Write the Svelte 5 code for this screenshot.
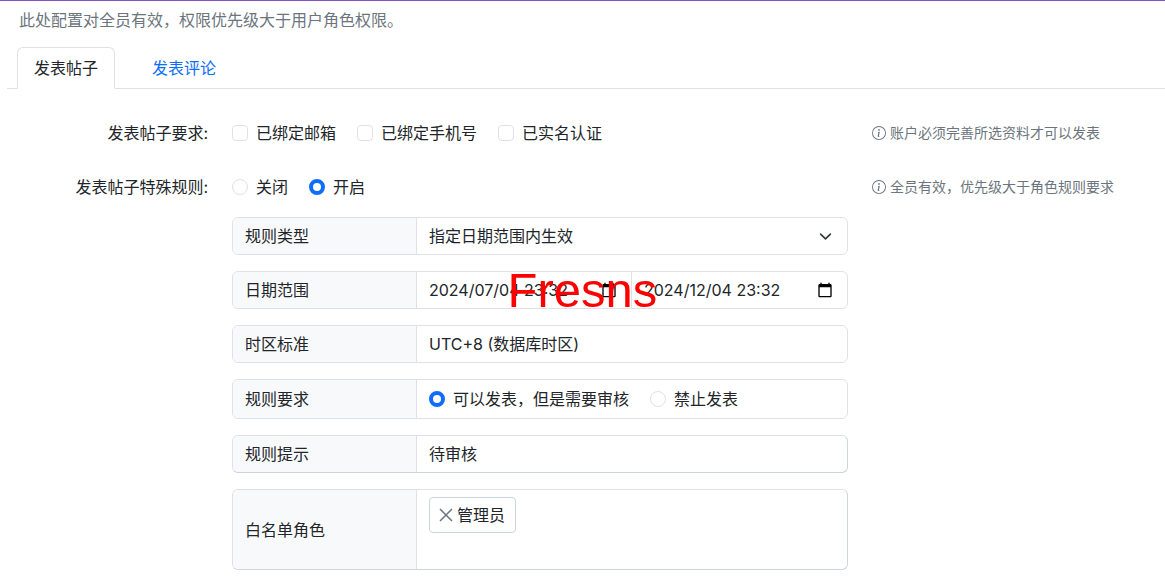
<script>
    const requirements = ['已绑定邮箱', '已绑定手机号', '已实名认证'];
</script>

<div class="page">
    <p class="intro">此处配置对全员有效，权限优先级大于用户角色权限。</p>

    <ul class="tabs">
        <li class="tab active">发表帖子</li>
        <li class="tab link">发表评论</li>
    </ul>

    <form class="form">
        <div class="label">发表帖子要求:</div>
        <div class="checks">
            {#each requirements as item}
                <label class="check">
                    <input type="checkbox" />
                    <span>{item}</span>
                </label>
            {/each}
        </div>
        <div class="hint">
            <svg viewBox="0 0 16 16" width="14" height="14" fill="currentColor">
                <path d="M8 15A7 7 0 1 1 8 1a7 7 0 0 1 0 14zm0 1A8 8 0 1 0 8 0a8 8 0 0 0 0 16z"/>
                <path d="m8.930 6.588-2.290.287-.082.380.450.083c.294.070.352.176.288.469l-.738 3.468c-.194.897.105 1.319.808 1.319.545 0 1.178-.252 1.465-.598l.088-.416c-.2.176-.492.246-.686.246-.275 0-.375-.193-.304-.533L8.930 6.588zM9 4.500a1 1 0 1 1-2 0 1 1 0 0 1 2 0z"/>
            </svg>
            账户必须完善所选资料才可以发表
        </div>

        <div class="label">发表帖子特殊规则:</div>
        <div class="checks">
            <label class="check">
                <input type="radio" name="special" />
                <span>关闭</span>
            </label>
            <label class="check">
                <input type="radio" name="special" checked />
                <span>开启</span>
            </label>
        </div>
        <div class="hint">
            <svg viewBox="0 0 16 16" width="14" height="14" fill="currentColor">
                <path d="M8 15A7 7 0 1 1 8 1a7 7 0 0 1 0 14zm0 1A8 8 0 1 0 8 0a8 8 0 0 0 0 16z"/>
                <path d="m8.930 6.588-2.290.287-.082.380.450.083c.294.070.352.176.288.469l-.738 3.468c-.194.897.105 1.319.808 1.319.545 0 1.178-.252 1.465-.598l.088-.416c-.2.176-.492.246-.686.246-.275 0-.375-.193-.304-.533L8.930 6.588zM9 4.500a1 1 0 1 1-2 0 1 1 0 0 1 2 0z"/>
            </svg>
            全员有效，优先级大于角色规则要求
        </div>

        <div class="groups">
            <div class="group">
                <div class="addon">规则类型</div>
                <div class="field select">
                    <span>指定日期范围内生效</span>
                    <svg viewBox="0 0 16 16" width="13" height="13" fill="none" stroke="#343a40" stroke-width="2" stroke-linecap="round" stroke-linejoin="round">
                        <path d="m2 5 6 6 6-6"/>
                    </svg>
                </div>
            </div>

            <div class="group">
                <div class="addon">日期范围</div>
                <div class="field date first">
                    <span>2024/07/04 23:32</span>
                    <svg viewBox="0 0 24 24" width="16" height="16" fill="#000">
                        <path d="M20 3h-1V1h-2v2H7V1H5v2H4c-1.100 0-2 .9-2 2v16c0 1.100.9 2 2 2h16c1.100 0 2-.9 2-2V5c0-1.100-.9-2-2-2zm0 18H4V8h16v13z"/>
                    </svg>
                </div>
                <div class="field date">
                    <span>2024/12/04 23:32</span>
                    <svg viewBox="0 0 24 24" width="16" height="16" fill="#000">
                        <path d="M20 3h-1V1h-2v2H7V1H5v2H4c-1.100 0-2 .9-2 2v16c0 1.100.9 2 2 2h16c1.100 0 2-.9 2-2V5c0-1.100-.9-2-2-2zm0 18H4V8h16v13z"/>
                    </svg>
                </div>
            </div>

            <div class="group">
                <div class="addon">时区标准</div>
                <div class="field">UTC+8 (数据库时区)</div>
            </div>

            <div class="group tall">
                <div class="addon">规则要求</div>
                <div class="field checks">
                    <label class="check">
                        <input type="radio" name="mode" checked />
                        <span>可以发表，但是需要审核</span>
                    </label>
                    <label class="check">
                        <input type="radio" name="mode" />
                        <span>禁止发表</span>
                    </label>
                </div>
            </div>

            <div class="group dark">
                <div class="addon">规则提示</div>
                <div class="field">待审核</div>
            </div>

            <div class="group roles dark">
                <div class="addon">白名单角色</div>
                <div class="field">
                    <span class="tag">
                        <svg viewBox="0 0 14 14" width="14" height="14" fill="none" stroke="#6c757d" stroke-width="1.5">
                            <path d="m1 1 12 12M13 1 1 13"/>
                        </svg>
                        管理员
                    </span>
                </div>
            </div>
        </div>
    </form>
</div>

<div class="watermark">Fresns</div>

<style>
    :global(body) {
        margin: 0;
        background: #fff;
        color: #212529;
        font-family: Inter, "Noto Sans CJK SC", sans-serif;
        font-size: 16px;
        line-height: 24px;
    }

    .page {
        height: 578px;
        overflow: hidden;
        border-top: 1px solid #7e57c2;
    }

    .intro {
        margin: 7px 0 15px 19px;
        color: #6c757d;
    }

    .tabs {
        display: flex;
        gap: 20px;
        margin: 0 0 25px 7px;
        padding: 0 0 0 10px;
        list-style: none;
        border-bottom: 1px solid #dee2e6;
    }

    .tab {
        margin-bottom: -1px;
        padding: 8px 16px;
        border: 1px solid transparent;
        border-radius: 6px 6px 0 0;
    }

    .active {
        background: #fff;
        border-color: #dee2e6 #dee2e6 #fff;
    }

    .link {
        color: #0d6efd;
    }

    .form {
        display: grid;
        grid-template-columns: 208px 616px 1fr;
        column-gap: 24px;
        row-gap: 16px;
    }

    .label {
        height: 38px;
        line-height: 38px;
        text-align: right;
    }

    .checks {
        display: flex;
        align-items: center;
        gap: 21px;
        height: 38px;
    }

    .check {
        display: flex;
        align-items: center;
        gap: 8px;
    }

    input {
        appearance: none;
        flex: none;
        width: 16px;
        height: 16px;
        margin: 0;
        background: #fff;
        border: 1px solid #dee2e6;
    }

    input[type="checkbox"] {
        border-radius: 4px;
    }

    input[type="radio"] {
        border-radius: 50%;
    }

    input[type="radio"]:checked {
        border: 4.5px solid #0d6efd;
    }

    .hint {
        display: flex;
        align-items: center;
        gap: 4px;
        height: 38px;
        color: #6c757d;
        font-size: 14px;
    }

    .groups {
        grid-column: 2;
        display: flex;
        flex-direction: column;
        gap: 16px;
        margin-top: -5px;
    }

    .group {
        display: flex;
        height: 38px;
        box-sizing: border-box;
        border: 1px solid #dee2e6;
        border-radius: 6px;
        overflow: hidden;
    }

    .group.tall {
        height: 40px;
    }

    .group.dark {
        border-color: #dee2e6 #ced4da #ced4da #dee2e6;
    }

    .group.roles {
        height: 81px;
    }

    .addon {
        display: flex;
        align-items: center;
        flex: none;
        box-sizing: border-box;
        width: 184px;
        padding: 0 12px;
        background: #f8f9fa;
        border-right: 1px solid #dee2e6;
    }

    .field {
        display: flex;
        align-items: center;
        flex: 1;
        min-width: 0;
        padding: 0 12px;
    }

    .select,
    .date {
        justify-content: space-between;
    }

    .select {
        padding-right: 15px;
    }

    .date {
        padding-right: 14px;
    }

    .date.first {
        flex: none;
        box-sizing: border-box;
        width: 215px;
        border-right: 1px solid #dee2e6;
    }

    .roles .field {
        align-items: flex-start;
        padding-top: 7px;
    }

    .tag {
        display: flex;
        align-items: center;
        gap: 4px;
        height: 36px;
        box-sizing: border-box;
        padding: 0 10px 0 9px;
        border: 1px solid #ced4da;
        border-radius: 4px;
    }

    .watermark {
        position: fixed;
        top: 50%;
        left: 50%;
        transform: translate(-50%, -50%);
        color: #f00;
        font-family: "Liberation Sans", Arial, sans-serif;
        font-size: 49px;
        line-height: 1;
        pointer-events: none;
    }
</style>
